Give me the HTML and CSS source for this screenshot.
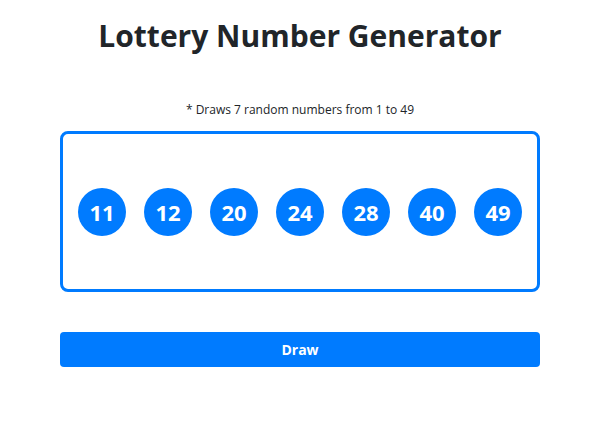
FILE: index.html
```html
<!DOCTYPE html>
<html>
<head>
<meta charset="utf-8">
<link rel="stylesheet" href="styles.css">
</head>
<body>
<div class="app">
  <h1 class="title">Lottery Number Generator</h1>
  <p class="note">* Draws 7 random numbers from 1 to 49</p>
  <div class="board">
    <span class="ball">11</span>
    <span class="ball">12</span>
    <span class="ball">20</span>
    <span class="ball">24</span>
    <span class="ball">28</span>
    <span class="ball">40</span>
    <span class="ball">49</span>
  </div>
  <button class="draw">Draw</button>
</div>
</body>
</html>
```
FILE: styles.css
```css
html, body {
  margin: 0;
  padding: 0;
  background: #fff;
}
body {
  font-family: "Open Sans", "Noto Sans", sans-serif;
  color: #212529;
}
.app {
  width: 480px;
  margin: 0 auto;
  display: flex;
  flex-direction: column;
  align-items: stretch;
}
.title {
  margin: 16px 0 0;
  font-size: 30px;
  font-weight: 700;
  line-height: 40px;
  text-align: center;
}
.note {
  margin: 45px 0 0;
  font-size: 12px;
  line-height: 18px;
  text-align: center;
}
.board {
  margin-top: 12px;
  height: 155px;
  border: 3px solid #007bff;
  border-radius: 8px;
  display: flex;
  align-items: center;
  justify-content: center;
  gap: 18px;
}
.ball {
  width: 48px;
  height: 48px;
  border-radius: 50%;
  background: #007bff;
  color: #fff;
  font-size: 22px;
  font-weight: 700;
  display: flex;
  align-items: center;
  justify-content: center;
}
.draw {
  margin-top: 40px;
  height: 35px;
  border: none;
  border-radius: 4px;
  background: #007bff;
  color: #fff;
  font-family: inherit;
  font-size: 14px;
  font-weight: 700;
  cursor: pointer;
}
```
